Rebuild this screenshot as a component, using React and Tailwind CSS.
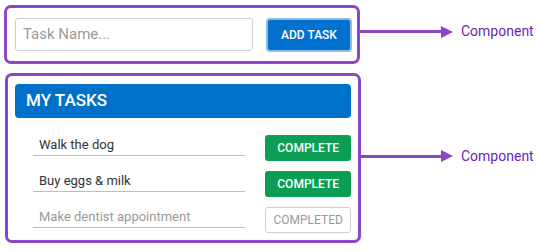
import React from 'react';

const tasks = [
  { name: 'Walk the dog', done: false },
  { name: 'Buy eggs & milk', done: false },
  { name: 'Make dentist appointment', done: true },
];

// purple connector arrow + label
const Pointer = ({ className = '', line = 'w-[81px]' }) => (
  <div className={`flex items-center ${className}`}>
    <div className={`${line} h-[3px] bg-[#8a46c4]`} />
    <svg width="12" height="12" viewBox="0 0 12 12" className="shrink-0">
      <polygon points="0,0 12,6 0,12" fill="#8a46c4" />
    </svg>
    <span className="ml-[8px] text-[14px] text-[#6b1fb8]">Component</span>
  </div>
);

const App = () => {
  return (
    <div className="w-[539px] h-[250px] bg-white pt-[5px] pl-[4px] font-['Roboto',sans-serif]">
      {/* Add task */}
      <div className="flex items-center">
        <div className="w-[356px] h-[59px] border-[3px] border-[#8a46c4] rounded-[7px] flex items-center pl-[8px]">
          <div className="w-[238px] h-[33px] border border-[#cfcfcf] rounded-[3px] flex items-center pl-[7px] text-[15px] text-[#9a9a9a]">
            Task Name...
          </div>
          <button className="ml-[13px] w-[86px] h-[34px] bg-[#0071ce] border-2 border-[#8fbbe2] rounded-[4px] text-white text-[12px] font-medium">
            ADD TASK
          </button>
        </div>
        <Pointer className="-mt-[6px]" />
      </div>

      {/* Task list */}
      <div className="flex items-center mt-[9px]">
        <div className="w-[356px] h-[170px] border-[3px] border-[#8a46c4] rounded-[7px] px-[7px] pt-[8px] ml-[1px]">
          <div className="h-[34px] bg-[#0071c9] rounded-[4px] flex items-center pl-[11px] text-white text-[17px] font-medium">
            MY TASKS
          </div>
          <div className="mt-[17px] flex flex-col gap-[10px] pl-[18px]">
            {tasks.map((t, i) => (
              <div key={i} className="flex items-start">
                <div
                  className={`w-[213px] h-[21px] border-b border-[#bdbdbd] pl-[6px] text-[13px] leading-[20px] ${
                    t.done ? 'text-[#999]' : 'text-[#333]'
                  }`}
                >
                  {t.name}
                </div>
                {t.done ? (
                  <button className="ml-[20px] w-[86px] h-[26px] border border-[#cfcfcf] rounded-[3px] bg-white text-[#9a9a9a] text-[12px]">
                    COMPLETED
                  </button>
                ) : (
                  <button className="ml-[20px] w-[86px] h-[26px] rounded-[3px] bg-[#0c9e55] text-white text-[12px] font-medium">
                    COMPLETE
                  </button>
                )}
              </div>
            ))}
          </div>
        </div>
        <Pointer className="-mt-[4px]" line="w-[80px]" />
      </div>
    </div>
  );
};

export default App;
